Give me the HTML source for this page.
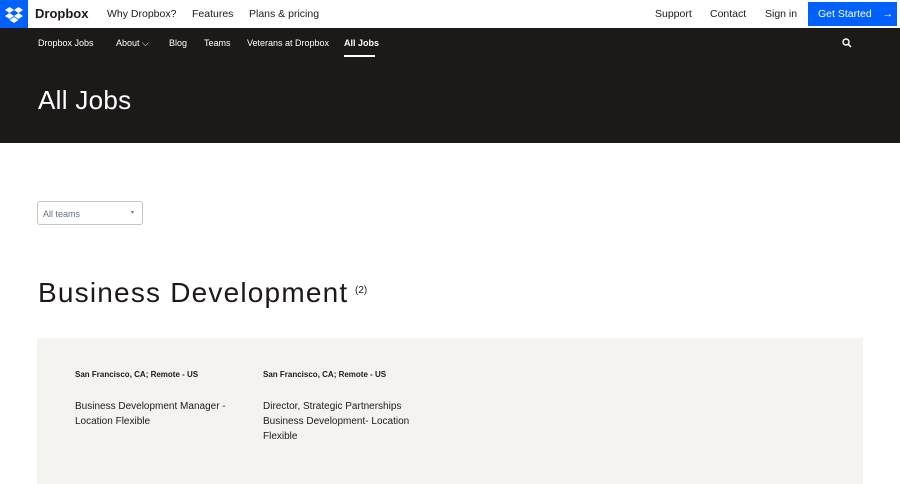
<!DOCTYPE html>
<html><head><style>
*{margin:0;padding:0;box-sizing:border-box}
body{width:900px;height:484px;overflow:hidden;background:#fff;font-family:"Liberation Sans",sans-serif;color:#1e1919;position:relative}
.top{height:28px;position:relative;background:#fff}
.logo{position:absolute;left:0;top:0;width:28px;height:28px;background:#0061fe}
.t{position:absolute;top:8px;font-size:10.5px;color:#1e1919;white-space:nowrap}
.gs{position:absolute;left:808px;top:2px;width:89px;height:24px;background:#0061fe;color:#fff;font-size:10.5px;padding:6px 0 0 10px;white-space:nowrap}
.dark{position:absolute;top:28px;left:0;width:900px;height:115px;background:#1e1919}
.n{position:absolute;top:10px;font-size:9px;color:#fff;white-space:nowrap}
h1{position:absolute;left:38px;top:57px;font-weight:400;font-size:26px;color:#fff;letter-spacing:.3px}
.sel{position:absolute;left:37px;top:201px;width:106px;height:24px;border:1px solid #c9c5c0;border-radius:3px;font-size:9px;color:#637282;padding:7px 0 0 5px}
h2{position:absolute;left:38px;top:277px;font-weight:400;font-size:28px;letter-spacing:1.2px;white-space:nowrap}
.sup{position:absolute;left:355px;top:285px;font-size:10px}
.box{position:absolute;left:37px;top:338px;width:826px;height:146px;background:#f5f3f0}
.loc{position:absolute;top:370px;font-size:8px;font-weight:700}
.job{position:absolute;top:399px;font-size:10px;line-height:15px;color:#1e1919}
</style></head><body>
<div class="top">
<div class="logo"><svg width="28" height="28" viewBox="0 0 28 28"><g fill="#fff"><path d="M9.5 7 5 10l4.5 3 4.5-3z"/><path d="M18.5 7 14 10l4.5 3 4.5-3z"/><path d="M5 16l4.5 3 4.5-3-4.5-3z"/><path d="M23 16l-4.5-3-4.5 3 4.5 3z"/><path d="M9.5 20 14 23l4.5-3L14 17z"/></g></svg></div>
<div class="t" style="left:35px;top:6px;font-size:13px;font-weight:700">Dropbox</div>
<div class="t" style="left:107px">Why Dropbox?</div>
<div class="t" style="left:192px">Features</div>
<div class="t" style="left:249px">Plans &amp; pricing</div>
<div class="t" style="left:655px">Support</div>
<div class="t" style="left:710px">Contact</div>
<div class="t" style="left:765px">Sign in</div>
<div class="gs">Get Started <span style="margin-left:8px">→</span></div>
</div>
<div class="dark">
<div class="n" style="left:38px">Dropbox Jobs</div>
<div class="n" style="left:116px">About ⌵</div>
<div class="n" style="left:169px">Blog</div>
<div class="n" style="left:204px">Teams</div>
<div class="n" style="left:247px">Veterans at Dropbox</div>
<div class="n" style="left:344px;font-weight:700">All Jobs</div>
<div style="position:absolute;left:344px;top:27px;width:31px;height:2px;background:#fff"></div>
<svg style="position:absolute;left:842px;top:10px" width="10" height="10" viewBox="0 0 10 10"><circle cx="4" cy="4" r="3" stroke="#fff" stroke-width="1.4" fill="none"/><path d="M6.2 6.2 9 9" stroke="#fff" stroke-width="1.5"/></svg>
<h1>All Jobs</h1>
</div>
<div class="sel">All teams<span style="position:absolute;right:8px;top:7px;font-size:6px">▾</span></div>
<h2>Business Development</h2>
<div class="sup">(2)</div>
<div class="box"></div>
<div class="loc" style="left:75px">San Francisco, CA; Remote - US</div>
<div class="loc" style="left:263px">San Francisco, CA; Remote - US</div>
<div class="job" style="left:75px">Business Development Manager -<br>Location Flexible</div>
<div class="job" style="left:263px">Director, Strategic Partnerships<br>Business Development- Location<br>Flexible</div>
</body></html>
